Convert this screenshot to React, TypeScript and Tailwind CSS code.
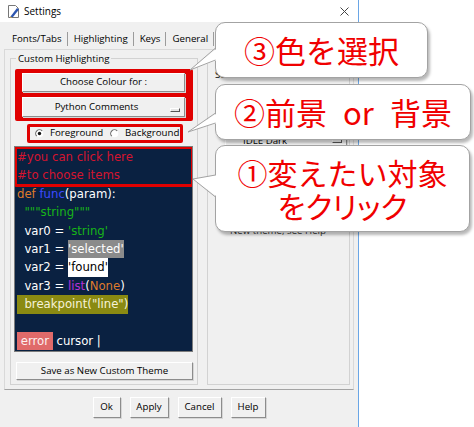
import React from "react";

const UI = "font-['Open_Sans',sans-serif] text-[9.7px] text-black";
const JP = "font-['Noto_Sans_CJK_JP',sans-serif] text-[#f00000]";
const CODE = "font-['DejaVu_Sans',sans-serif] text-[11.7px] leading-[18.4px]";

const raised =
  "border border-t-white border-l-white border-r-[#8c8c8c] border-b-[#8c8c8c] bg-[#f0f0f0] shadow-[1px_1px_0_#d6d6d6]";

type BtnProps = { label: string; className?: string };

const WinButton = ({ label, className = "" }: BtnProps) => (
  <div className={`flex items-center justify-center ${raised} ${className}`}>
    {label}
  </div>
);

const Radio = ({ checked }: { checked: boolean }) => (
  <svg width="9" height="9" viewBox="0 0 9 9">
    <circle cx="4.5" cy="4.5" r="3.8" fill="#fff" />
    <path
      d="M1.8 7.2 A3.8 3.8 0 0 1 7.2 1.8"
      stroke="#6a6a6a"
      strokeWidth="1.1"
      fill="none"
    />
    {checked && <circle cx="4.5" cy="4.5" r="1.7" fill="#111" />}
  </svg>
);

const AppIcon = () => (
  <svg width="14" height="15" viewBox="0 0 14 15">
    <path d="M1.5 1.5h7l3 3v9h-10z" fill="#fff" stroke="#777" />
    <path d="M3.5 12.5 L10 4 L12 5.6 L5.6 13.6 L3 14z" fill="#2d56b0" />
    <path d="M3.5 12.5 L5.6 13.6 L3 14z" fill="#e3b341" />
  </svg>
);

type CalloutProps = {
  className: string;
  base: [number, number];
  tip: [number, number];
  children: React.ReactNode;
};

// speech balloon laid over the dialog
const Callout = ({ className, base, tip, children }: CalloutProps) => (
  <div
    className={`absolute flex flex-col items-center justify-center rounded-[10px] border border-[#a3a3a3] bg-white shadow-[2px_3px_3px_rgba(0,0,0,0.28)] ${className}`}
  >
    <svg
      className="absolute left-0 top-0 overflow-visible"
      width="1"
      height="1"
    >
      <polygon
        points={`1.5,${base[0]} ${tip[0]},${tip[1]} 1.5,${base[1]}`}
        fill="#fff"
      />
      <polyline
        points={`-0.5,${base[0]} ${tip[0]},${tip[1]} -0.5,${base[1]}`}
        fill="none"
        stroke="#a3a3a3"
      />
    </svg>
    {children}
  </div>
);

const comment = "text-[#d4142f]";
const keyword = "text-[#df7a2b]";
const definition = "text-[#3c4aff]";
const str = "text-[#18b418]";
const builtin = "text-[#b531d8]";

const CodeSample = () => (
  <div
    className={`relative ml-[3px] mt-[3px] h-[206px] w-[179px] overflow-hidden border border-[#7d7d7d] bg-[#0a2141] pl-[2px] pt-[1px] text-white ${CODE}`}
  >
    <div className="relative">
      <div className={`whitespace-pre ${comment}`}>#you can click here</div>
      <div className={`whitespace-pre ${comment}`}>#to choose items</div>
      <div className="absolute -left-[3px] -top-[2px] h-[41px] w-[180px] rounded-[3px] border-[3px] border-[#e00000]" />
    </div>
    <div className="whitespace-pre">
      <span className={keyword}>def</span> <span className={definition}>func</span>
      (param):
    </div>
    <div className="whitespace-pre">
      {"  "}
      <span className={str}>"""string"""</span>
    </div>
    <div className="whitespace-pre">
      {"  var0 = "}
      <span className={str}>'string'</span>
    </div>
    <div className="flex whitespace-pre">
      {"  var1 = "}
      <span className="bg-[#8b8b8b] text-white">'selected'</span>
    </div>
    <div className="flex whitespace-pre">
      {"  var2 = "}
      <span className="bg-white text-black">'found'</span>
    </div>
    <div className="whitespace-pre">
      {"  var3 = "}
      <span className={builtin}>list</span>(<span className={keyword}>None</span>)
    </div>
    <div className="flex whitespace-pre">
      <span className="bg-[#8a8a12] text-[#f6f2d8]">{'  breakpoint("line")'}</span>
    </div>
    <div className="h-[18.4px]" />
    <div className="flex whitespace-pre">
      <span className="bg-[#e06a6a] text-[#fdf0f0]">{" error "}</span>
      {" cursor |"}
    </div>
  </div>
);

const App = (): JSX.Element => {
  return (
    <div className={`relative h-[427px] w-[474px] overflow-hidden bg-white ${UI}`}>
      <div className="flex h-full w-[359px] flex-col border-r border-r-[#6aa6e6] bg-[#f0f0f0]">
        {/* title bar */}
        <div className="flex h-[22px] items-center bg-white">
          <span className="ml-[7px] flex">
            <AppIcon />
          </span>
          <span className="ml-[3px] text-[10px]">Settings</span>
          <svg className="ml-auto mr-[9px]" width="9" height="9" viewBox="0 0 9 9">
            <path d="M0.5 0.5 L8.5 8.5 M8.5 0.5 L0.5 8.5" stroke="#444" />
          </svg>
        </div>

        {/* tabs */}
        <div className="flex h-[27px] items-center pl-[6px] pt-[7px]">
          {["Fonts/Tabs", "Highlighting", "Keys", "General"].map((t) => (
            <React.Fragment key={t}>
              <span className="pl-[6px] pr-[5px]">{t}</span>
              <span className="h-[14px] w-px bg-[#9b9b9b]" />
            </React.Fragment>
          ))}
        </div>

        {/* notebook page */}
        <div className="mx-[4px] flex h-[341px] gap-[9px] border border-[#d9d9d9] border-b-[#a3a3a3] pb-[4px] pl-[5px] pr-[3px] pt-[2px]">
          <fieldset className="w-[188px] border border-[#d2d2d2]">
            <legend className="ml-[5px] px-[2px] leading-[13px]">
              Custom Highlighting
            </legend>
            <div className="flex flex-col">
              <div className="ml-[4px] mt-[4px] flex w-[178px] flex-col gap-[5px] rounded-[2px] bg-[#e00000] pb-[4px] pl-[7px] pr-[8px] pt-[4px]">
                <WinButton label="Choose Colour for :" className="h-[19px]" />
                <div className={`flex h-[20px] items-center ${raised}`}>
                  <span className="flex-1 text-center">Python Comments</span>
                  <span className="mb-[-5px] mr-[4px] h-[4px] w-[10px] border border-t-white border-l-white border-b-[#555] border-r-[#555] bg-[#e6e6e6]" />
                </div>
              </div>

              <div className="ml-[16px] mt-[3px] flex h-[19px] w-[156px] items-center rounded-[2px] border-[3px] border-[#e00000] pl-[5px]">
                <Radio checked />
                <span className="ml-[6px]">Foreground</span>
                <span className="ml-[7px] flex">
                  <Radio checked={false} />
                </span>
                <span className="ml-[6px]">Background</span>
              </div>

              <CodeSample />

              <WinButton
                label="Save as New Custom Theme"
                className="ml-[5px] mt-[10px] h-[18px] w-[177px]"
              />
            </div>
          </fieldset>

          {/* theme frame, mostly covered by the balloons */}
          <div className="mt-[6px] flex flex-1 flex-col border border-[#d2d2d2]">
            <span className="ml-[7px] mt-[9px] leading-[13px]">Select :</span>
            <div className={`ml-[17px] mr-[2px] mt-[50px] flex h-[20px] items-center ${raised}`}>
              <span className="ml-[17px] flex-1">IDLE Dark</span>
              <span className="mr-[4px] h-[4px] w-[10px] border border-t-white border-l-white border-b-[#555] border-r-[#555]" />
            </div>
            <span className="ml-[22px] mt-[73px] leading-[13px] text-[#333]">
              New theme, see Help
            </span>
          </div>
        </div>

        {/* dialog buttons */}
        <div className="mt-[7px] flex justify-center gap-[9px]">
          <WinButton label="Ok" className="h-[21px] w-[28px]" />
          <WinButton label="Apply" className="h-[21px] w-[39px]" />
          <WinButton label="Cancel" className="h-[21px] w-[44px]" />
          <WinButton label="Help" className="h-[21px] w-[35px]" />
        </div>
      </div>

      <Callout className="left-[215px] top-[22px] h-[56px] w-[213px]" base={[25, 37]} tip={[-26, 47]}>
        <span className={`${JP} text-[31px] leading-[40px]`}>③色を選択</span>
      </Callout>

      <Callout className="left-[215px] top-[84px] h-[56px] w-[256px]" base={[28, 38]} tip={[-28, 47]}>
        <span className={`${JP} text-[31px] leading-[40px]`}>
          ②前景<span className="mx-[16px]">or</span>背景
        </span>
      </Callout>

      <Callout className="left-[215px] top-[145px] h-[87px] w-[255px]" base={[29, 51]} tip={[-23, 33]}>
        <p className={`${JP} text-center text-[30px] leading-[33px]`}>
          ①変えたい対象
          <br />
          <span className="[font-feature-settings:'palt']">をクリック</span>
        </p>
      </Callout>
    </div>
  );
};

export default App;
